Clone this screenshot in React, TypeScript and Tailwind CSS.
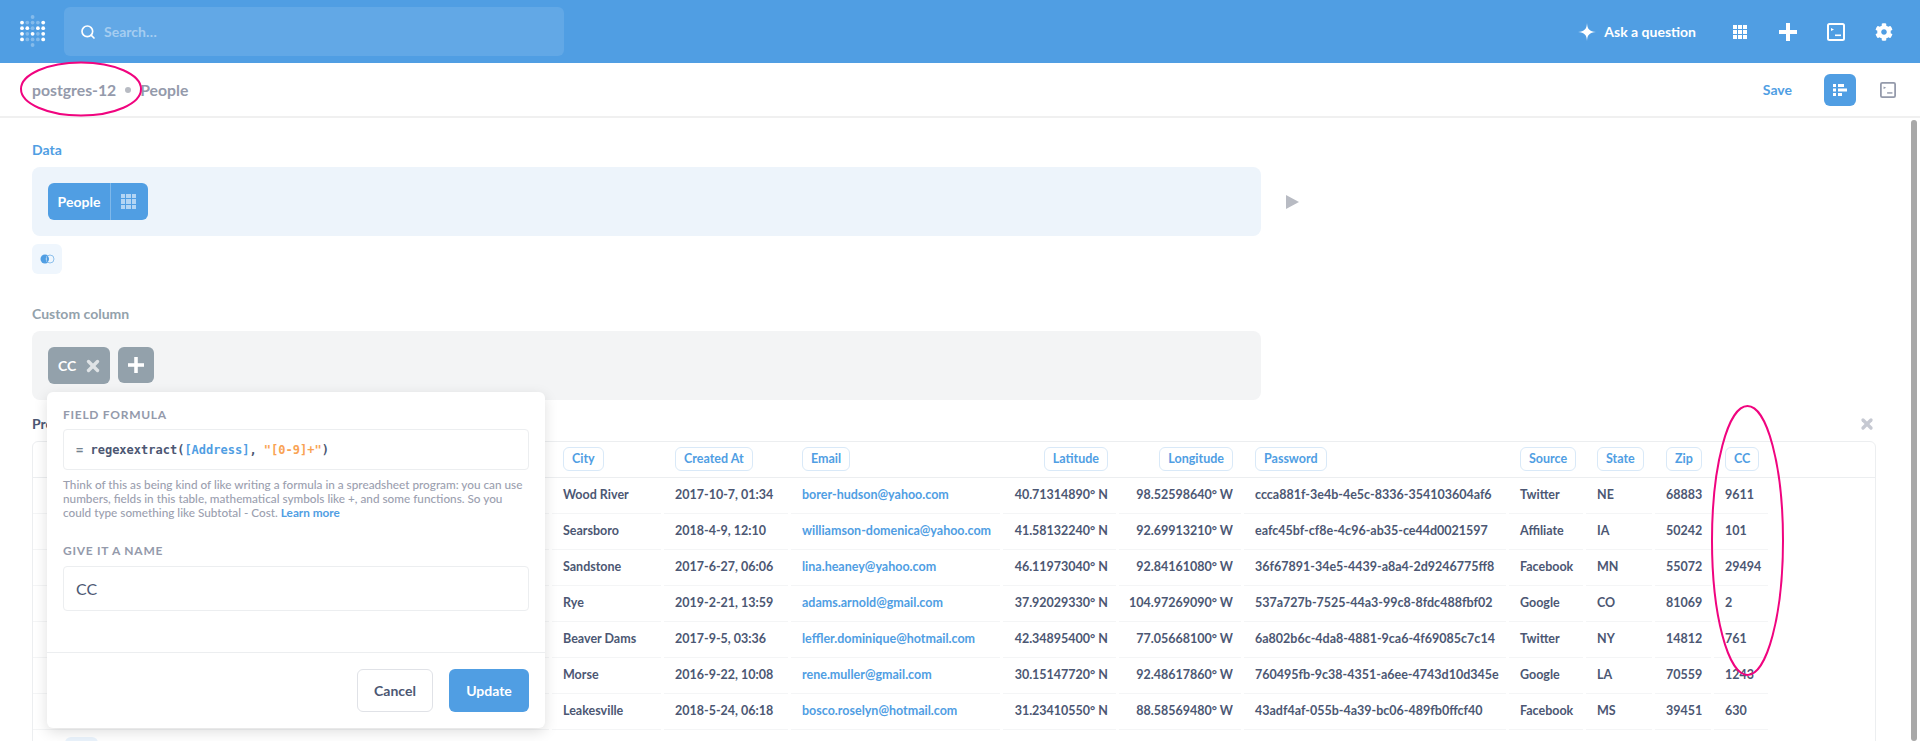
import React from 'react';
import { Search, X } from 'lucide-react';
import { FaCog } from 'react-icons/fa';

const rows = [
  ['Wood River', '2017-10-7, 01:34', 'borer-hudson@yahoo.com', '40.71314890° N', '98.52598640° W', 'ccca881f-3e4b-4e5c-8336-354103604af6', 'Twitter', 'NE', '68883', '9611'],
  ['Searsboro', '2018-4-9, 12:10', 'williamson-domenica@yahoo.com', '41.58132240° N', '92.69913210° W', 'eafc45bf-cf8e-4c96-ab35-ce44d0021597', 'Affiliate', 'IA', '50242', '101'],
  ['Sandstone', '2017-6-27, 06:06', 'lina.heaney@yahoo.com', '46.11973040° N', '92.84161080° W', '36f67891-34e5-4439-a8a4-2d9246775ff8', 'Facebook', 'MN', '55072', '29494'],
  ['Rye', '2019-2-21, 13:59', 'adams.arnold@gmail.com', '37.92029330° N', '104.97269090° W', '537a727b-7525-44a3-99c8-8fdc488fbf02', 'Google', 'CO', '81069', '2'],
  ['Beaver Dams', '2017-9-5, 03:36', 'leffler.dominique@hotmail.com', '42.34895400° N', '77.05668100° W', '6a802b6c-4da8-4881-9ca6-4f69085c7c14', 'Twitter', 'NY', '14812', '761'],
  ['Morse', '2016-9-22, 10:08', 'rene.muller@gmail.com', '30.15147720° N', '92.48617860° W', '760495fb-9c38-4351-a6ee-4743d10d345e', 'Google', 'LA', '70559', '1243'],
  ['Leakesville', '2018-5-24, 06:18', 'bosco.roselyn@hotmail.com', '31.23410550° N', '88.58569480° W', '43adf4af-055b-4a39-bc06-489fb0ffcf40', 'Facebook', 'MS', '39451', '630'],
];

const columns = ['City', 'Created At', 'Email', 'Latitude', 'Longitude', 'Password', 'Source', 'State', 'Zip', 'CC'];

function Logo() {
  const pattern = ['00100', '21112', '22122', '21212', '21112', '00100'];
  return (
    <svg width="26" height="34" viewBox="0 0 26 34" fill="#fff">
      {pattern.map((row, y) =>
        row.split('').map((c, x) =>
          c === '0' ? null : (
            <circle key={`${x}-${y}`} cx={2 + x * 5.3} cy={2 + y * 5.6} r="1.9" opacity={c === '2' ? 1 : 0.3} />
          ),
        ),
      )}
    </svg>
  );
}

function TerminalIcon({ className }: { className: string }) {
  return (
    <svg className={className} viewBox="0 0 18 18" fill="none">
      <rect x="1" y="1" width="16" height="16" rx="1.5" stroke="currentColor" strokeWidth="2" />
      <path d="M4 5l3 1.5L4 8z" fill="currentColor" />
      <rect x="8" y="11.5" width="6" height="1.6" fill="currentColor" />
    </svg>
  );
}

function PlusIcon({ className }: { className: string }) {
  return (
    <svg className={className} viewBox="0 0 18 18" fill="currentColor">
      <rect x="7" y="0" width="4" height="18" />
      <rect x="0" y="7" width="18" height="4" />
    </svg>
  );
}

function SmallGrid() {
  return (
    <svg width="14" height="14" viewBox="0 0 14 14" fill="#fff">
      {[0, 5, 10].map((y) => [0, 5, 10].map((x) => <rect key={`${x}-${y}`} x={x} y={y} width="4" height="4" />))}
    </svg>
  );
}

function Navbar() {
  return (
    <div className="h-[63px] bg-[#509ee3] flex items-center pl-[20px] pr-[27px]">
      <Logo />
      <div className="ml-[18px] w-[500px] h-[49px] rounded-md bg-[#62a8e6] flex items-center pl-[16px] text-[14px] font-bold text-[#a5cdf1]">
        <Search className="w-[16px] h-[16px] text-white" strokeWidth={2.5} />
        <span className="ml-[8px]">Search…</span>
      </div>
      <div className="ml-auto flex items-center text-white">
        <svg width="18" height="18" viewBox="0 0 18 18" fill="#fff">
          <path d="M9 0c.3 6 2.500 8.600 9 9-6.500.4-8.700 3-9 9-.3-6-2.500-8.600-9-9 6.500-.4 8.700-3 9-9z" />
        </svg>
        <span className="ml-[8px] text-[14px] font-bold">Ask a question</span>
        <span className="ml-[37px]"><SmallGrid /></span>
        <PlusIcon className="ml-[32px] w-[18px] h-[18px]" />
        <TerminalIcon className="ml-[30px] w-[18px] h-[18px]" />
        <FaCog className="ml-[30px] w-[18px] h-[18px]" />
      </div>
    </div>
  );
}

function Subheader() {
  return (
    <div className="h-[55px] border-b-2 border-[#f0f0f0] flex items-center pl-[32px] pr-[24px] text-[15.75px] font-bold text-[#949aab]">
      <span>postgres-12</span>
      <span className="ml-[9px] w-[6px] h-[6px] rounded-full bg-[#b8bbc3]" />
      <span className="ml-[9px]">People</span>
      <span className="ml-auto text-[14px] text-[#509ee3]">Save</span>
      <span className="ml-[32px] w-[32px] h-[32px] rounded-md bg-[#509ee3] flex items-center justify-center">
        <svg width="16" height="14" viewBox="0 0 16 14" fill="#fff">
          <rect x="1" y="1" width="3" height="3" />
          <rect x="6" y="1" width="6" height="3" />
          <rect x="1" y="5.500" width="3" height="3" />
          <rect x="6" y="5.500" width="9" height="3" />
          <rect x="1" y="10" width="3" height="3" />
          <rect x="6" y="10" width="4" height="3" />
        </svg>
      </span>
      <TerminalIcon className="ml-[24px] w-[16px] h-[16px] text-[#949aab]" />
    </div>
  );
}

function NotebookSections() {
  return (
    <div className="pl-[32px] pr-[44px]">
      <div className="pt-[24px] h-[40px] text-[14px] leading-[16px] font-bold text-[#509ee3]">Data</div>
      <div className="mt-[9px] flex items-center">
        <div className="w-[1229px] h-[69px] rounded-lg bg-[#edf4fb] pl-[16px] pt-[16px]">
          <div className="w-[100px] h-[37px] rounded-md bg-[#509ee3] flex items-center text-[14px] font-bold text-white">
            <span className="w-[63px] h-full flex items-center justify-center border-r border-[#7fb8ea]">People</span>
            <span className="ml-[10px] grid grid-cols-3 grid-rows-3 gap-px w-[15px] h-[15px]">
              {Array.from({ length: 9 }).map((_, i) => (
                <span key={i} className="bg-[#b3d5f4]" />
              ))}
            </span>
          </div>
        </div>
        <svg className="ml-[25px]" width="13" height="14" viewBox="0 0 13 14" fill="#b8bbc3">
          <path d="M0 0l13 7-13 7z" />
        </svg>
      </div>
      <div className="mt-[8px] w-[30px] h-[30px] rounded-md bg-[#eff6fd] flex items-center justify-center">
        <svg width="15" height="10" viewBox="0 0 15 10">
          <circle cx="5" cy="5" r="4.500" fill="#509ee3" />
          <circle cx="10" cy="5" r="4" fill="#eff6fd" stroke="#8fc1ec" strokeWidth="1" />
          <path d="M7 1.500a4 4 0 0 1 0 7z" fill="#509ee3" />
        </svg>
      </div>
      <div className="mt-[32px] h-[16px] text-[14px] leading-[16px] font-bold text-[#93a1ab]">Custom column</div>
      <div className="mt-[9px] w-[1229px] h-[69px] rounded-lg bg-[#f3f4f5] pl-[16px] pt-[16px] flex items-start">
        <div className="w-[62px] h-[37px] rounded-md bg-[#93a1ab] flex items-center pl-[10px] text-[14px] font-bold text-white">
          CC
          <X className="ml-[8px] w-[18px] h-[18px] text-[#dfe3e6]" strokeWidth={4.5} />
        </div>
        <div className="ml-[8px] w-[36px] h-[36px] rounded-md bg-[#93a1ab] flex items-center justify-center">
          <PlusIcon className="w-[16px] h-[16px] text-white" />
        </div>
      </div>
      <div className="mt-[16px] h-[16px] flex items-center justify-between pr-[1px]">
        <span className="text-[14px] leading-[16px] font-bold text-[#4c5773]">Preview</span>
        <X className="w-[16px] h-[16px] text-[#c6c9d2]" strokeWidth={5} />
      </div>
    </div>
  );
}

function PreviewTable() {
  const widths = ['w-[519px]', 'w-[112px]', 'w-[127px]', 'w-[212px]', 'w-[116px]', 'w-[125px]', 'w-[265px]', 'w-[77px]', 'w-[69px]', 'w-[59px]', 'w-[57px]', ''];
  return (
    <div className="mt-[9px] ml-[32px] mr-[44px] border border-[#eceef0] rounded-t-md">
      <table className="w-full table-fixed text-[12.5px] font-bold text-[#4c5773]">
        <colgroup>
          {widths.map((w, i) => (
            <col key={i} className={w} />
          ))}
        </colgroup>
        <thead>
          <tr className="h-[35px] border-b border-[#eceef0]">
            <th />
            {columns.map((c, i) => (
              <th key={c} className={`px-[11px] font-bold ${i === 3 || i === 4 ? 'text-right' : 'text-left'}`}>
                <span className="inline-flex items-center h-[24px] px-[8px] rounded-md border border-[#d9e9f8] text-[#509ee3]">{c}</span>
              </th>
            ))}
            <th />
          </tr>
        </thead>
        <tbody>
          {rows.map((row) => (
            <tr key={row[0]} className="h-[36px]">
              <td className="p-0 align-top">
                <div className="h-[36px] mr-[3px] border-b border-[#f4f5f6]" />
              </td>
              {row.map((v, i) => (
                <td key={i} className="p-0 align-top">
                  <div
                    className={`h-[36px] mr-[3px] pl-[11px] pr-[8px] flex items-center whitespace-nowrap border-b border-[#f4f5f6] ${
                      i === 2 ? 'text-[#509ee3]' : ''
                    } ${i === 3 || i === 4 ? 'justify-end' : ''}`}
                  >
                    {v}
                  </div>
                </td>
              ))}
              <td />
            </tr>
          ))}
        </tbody>
      </table>
      <div className="mt-[7px] ml-[32px] w-[33px] h-[24px] rounded-md bg-[#eaf3fc]" />
    </div>
  );
}

// sits on top of the table, anchored under the CC chip
function FormulaPopover() {
  return (
    <div className="absolute left-[47px] top-[392px] w-[498px] h-[336px] rounded-md bg-white shadow-[0_4px_14px_rgba(0,0,0,0.13)] flex flex-col">
      <div className="px-[16px] pt-[16px] flex-1">
        <div className="text-[12px] leading-[14px] font-bold tracking-[0.06em] text-[#949aab]">FIELD FORMULA</div>
        <div className="mt-[7px] h-[41px] rounded border border-[#eceef0] flex items-center pl-[12px] font-['DejaVu_Sans_Mono',monospace] text-[12px] font-bold text-[#4c5773] whitespace-pre">
          <span className="text-[#74838f]">= </span>
          regexextract(
          <span className="text-[#509ee3]">[Address]</span>
          {', '}
          <span className="text-[#f9a354]">"[0-9]+"</span>)
        </div>
        <p className="mt-[8px] text-[11.75px] leading-[14px] font-medium text-[#9ba0af]">
          Think of this as being kind of like writing a formula in a spreadsheet program: you can use numbers, fields in this table, mathematical symbols like +, and some functions. So you could type something like Subtotal - Cost.{' '}
          <span className="font-bold text-[#509ee3]">Learn more</span>
        </p>
        <div className="mt-[24px] text-[12px] leading-[14px] font-bold tracking-[0.06em] text-[#949aab]">GIVE IT A NAME</div>
        <div className="mt-[8px] h-[45px] rounded border border-[#eceef0] flex items-center pl-[12px] text-[16px] text-[#4c5773]">CC</div>
      </div>
      <div className="h-[76px] border-t border-[#eceef0] flex justify-end items-start pt-[16px] pr-[16px]">
        <div className="w-[76px] h-[43px] rounded-md border border-[#e0e2e7] flex items-center justify-center text-[14px] font-bold text-[#4c5773]">Cancel</div>
        <div className="ml-[16px] w-[80px] h-[43px] rounded-md bg-[#509ee3] flex items-center justify-center text-[14px] font-bold text-white">Update</div>
      </div>
    </div>
  );
}

// pink hand-drawn annotations from the original screenshot
function Annotations() {
  return (
    <>
      <svg className="absolute left-[19px] top-[60px]" width="124" height="58" viewBox="0 0 124 58" fill="none">
        <ellipse cx="62" cy="29" rx="60" ry="26.500" stroke="#f0047f" strokeWidth="2" />
      </svg>
      <svg className="absolute left-[1710px] top-[404px]" width="75" height="273" viewBox="0 0 75 273" fill="none">
        <ellipse cx="37.500" cy="136.500" rx="35.500" ry="134.500" stroke="#f0047f" strokeWidth="2" />
      </svg>
    </>
  );
}

export default function App() {
  return (
    <div className="relative h-[741px] overflow-hidden bg-white font-['Lato',sans-serif]">
      <Navbar />
      <Subheader />
      <NotebookSections />
      <PreviewTable />
      <FormulaPopover />
      <Annotations />
      <div className="absolute right-[3px] top-[120px] w-[6px] h-[621px] rounded-full bg-[#a8a8a8]" />
    </div>
  );
}
